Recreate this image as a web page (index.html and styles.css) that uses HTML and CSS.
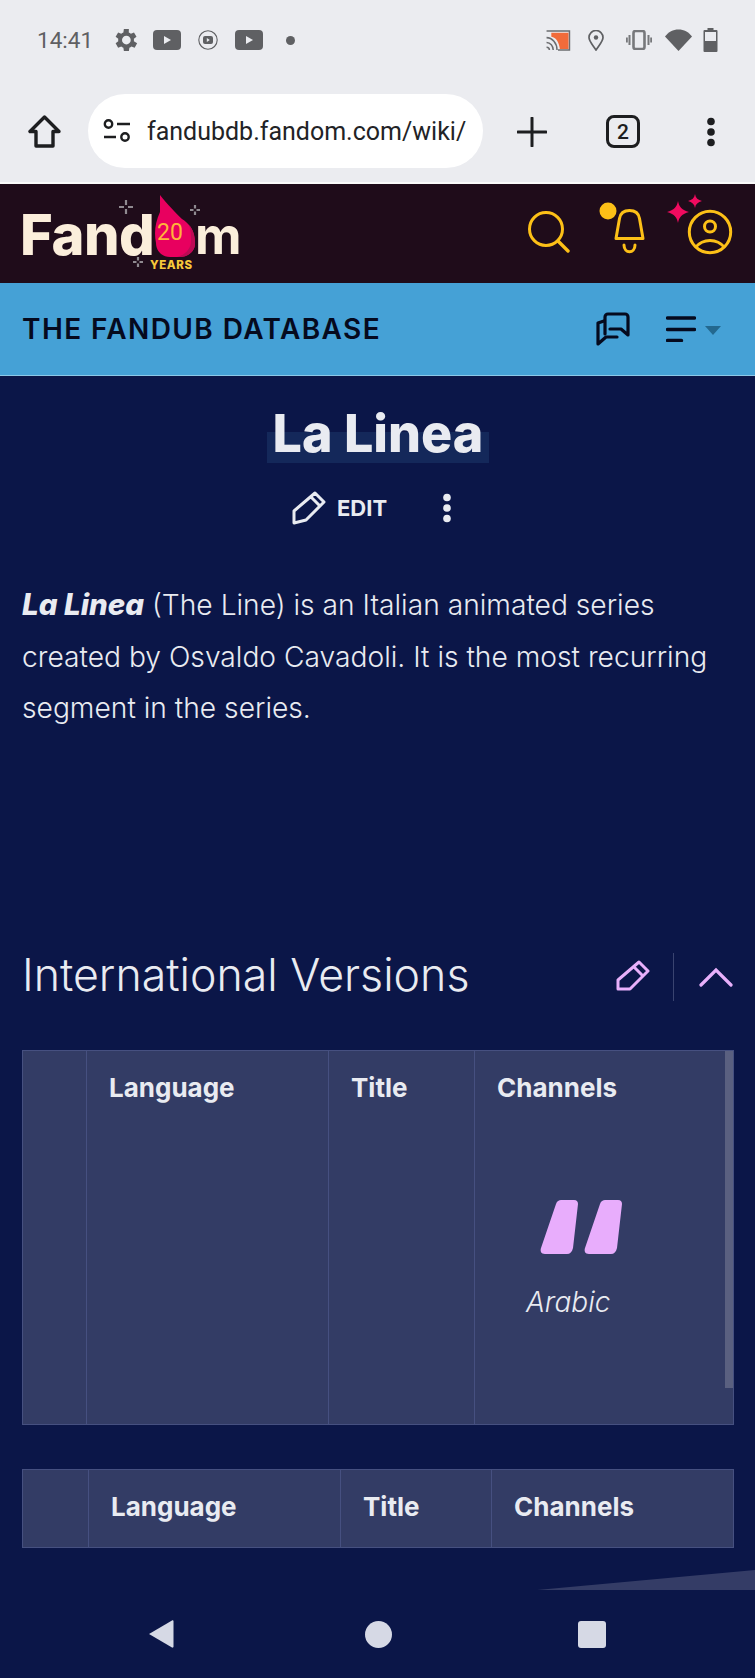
FILE: index.html
```html
<!DOCTYPE html>
<html>
<head>
  <title>La Linea | The Fandub Database</title>
  <link rel="stylesheet" href="styles.css">
</head>
<body>
  <div class="chrome">
    <div class="status-bar">
      <span class="clock">14:41</span>
      <svg class="st-gear" viewBox="0 0 24 24"><path fill="#5f6063" d="M19.4 13a7.500 7.500 0 0 0 0-2l2.100-1.600-2-3.500-2.500 1a7.500 7.500 0 0 0-1.700-1L15.400 3.200h-4l-.4 2.700a7.500 7.500 0 0 0-1.700 1l-2.500-1-2 3.500L6.900 11a7.500 7.500 0 0 0 0 2l-2.100 1.600 2 3.500 2.500-1a7.500 7.500 0 0 0 1.700 1l.4 2.700h4l.4-2.700a7.500 7.500 0 0 0 1.700-1l2.500 1 2-3.500zM13.400 15.500a3.500 3.500 0 1 1 0-7 3.500 3.500 0 0 1 0 7z" transform="translate(-1.100 0)"/></svg>
      <svg class="st-play" viewBox="0 0 28 20"><rect width="28" height="20" rx="4" fill="#5f6063"/><path d="M11 6l7 4-7 4z" fill="#ebecf0"/></svg>
      <svg class="st-disc" viewBox="0 0 20 20"><circle cx="10" cy="10" r="9.200" fill="none" stroke="#5f6063" stroke-width="1.100"/><rect x="5" y="6" width="10" height="8" rx="2" fill="#5f6063"/><path d="M8.800 8l3 2-3 2z" fill="#ebecf0"/></svg>
      <svg class="st-play st-play-last" viewBox="0 0 28 20"><rect width="28" height="20" rx="4" fill="#5f6063"/><path d="M11 6l7 4-7 4z" fill="#ebecf0"/></svg>
      <span class="st-dot"></span>
      <span class="st-spacer"></span>
      <svg class="st-cast" viewBox="0 0 26 22"><path d="M1 1h24v20H13" fill="none" stroke="#6b6c6f" stroke-width="1.600"/><path d="M6 3h18v17H15C14 12 11 8 6 7z" fill="#f26b3a"/><path d="M1 8c6 0 11 6 11 13M1 13c4 0 7 4 7 8M1 18c2 0 3 1 3 3" fill="none" stroke="#6b6c6f" stroke-width="1.600"/></svg>
      <svg class="st-pin" viewBox="0 0 18 21"><path d="M9 20C5 14 2 11 2 7.500a7 7 0 0 1 14 0C16 11 13 14 9 20z" fill="none" stroke="#5f6063" stroke-width="1.700"/><circle cx="9" cy="7.500" r="2.200" fill="#5f6063"/></svg>
      <svg class="st-vib" viewBox="0 0 26 20"><rect x="7.500" y="1" width="11" height="18" rx="2" fill="none" stroke="#77787b" stroke-width="2.600"/><path d="M3.500 5v10M22.500 5v10M.8 7.500v5M25.200 7.500v5" stroke="#77787b" stroke-width="2" fill="none"/></svg>
      <svg class="st-wifi" viewBox="0 0 27 22"><path d="M13.500 22L0 7.500C3.500 3 8 .5 13.500.5S23.500 3 27 7.500z" fill="#5f6063"/></svg>
      <svg class="st-batt" viewBox="0 0 15 24"><path d="M4.500 0h6v2h3a1 1 0 0 1 1 1v20a1 1 0 0 1-1 1h-12a1 1 0 0 1-1-1V3a1 1 0 0 1 1-1h3z" fill="#5f6063"/><rect x="2" y="4" width="11" height="9" fill="#ebecf0"/></svg>
    </div>
    <div class="toolbar">
      <svg class="tb-home" viewBox="0 0 33 33"><path d="M16.500 2L2 16.500h6V31h17V16.500h6z" fill="none" stroke="#1d1e20" stroke-width="3.400" stroke-linejoin="round"/></svg>
      <div class="url-pill">
        <svg class="tb-tune" viewBox="0 0 28 24"><circle cx="5.500" cy="5" r="3.700" fill="none" stroke="#1d1e20" stroke-width="2.400"/><path d="M14 5h13M1 18h12" stroke="#1d1e20" stroke-width="2.600" fill="none"/><circle cx="22" cy="18" r="3.700" fill="none" stroke="#1d1e20" stroke-width="2.400"/></svg>
        <span class="url-text">fandubdb.fandom.com/wiki/</span>
      </div>
      <svg class="tb-plus" viewBox="0 0 30 30"><path d="M15 1v28M1 15h28" stroke="#1d1e20" stroke-width="3" stroke-linecap="round"/></svg>
      <div class="tab-count">2</div>
      <svg class="tb-more" viewBox="0 0 10 30"><circle cx="5" cy="4.500" r="3.800" fill="#1d1e20"/><circle cx="5" cy="15" r="3.800" fill="#1d1e20"/><circle cx="5" cy="25.500" r="3.800" fill="#1d1e20"/></svg>
    </div>
  </div>

  <header class="global-nav">
    <div class="logo">
      <span class="logo-word logo-left">Fand</span>
      <div class="logo-flame">
        <svg viewBox="0 0 46 62"><path d="M10 0C18 10 26 18 32 24 38 28 45 34 45 49 45 56 38 62 30 62H20C12 62 6 56 6 48 4 38 5 28 10 17z" fill="#e8005f"/><path d="M39 30C43 34 45 40 45 49 45 56 38 62 30 62H27C35 60 41 54 41 46 41 40 41 35 39 30z" fill="#bd0a55"/></svg>
        <span class="logo-num">20</span>
      </div>
      <span class="logo-word logo-right">m</span>
      <span class="logo-years">YEARS</span>
      <svg class="logo-spark spark-a" viewBox="0 0 14 14"><path d="M7 0v5M7 9v5M0 7h5M9 7h5" stroke="#8f8a90" stroke-width="2.200" fill="none"/></svg>
      <svg class="logo-spark spark-b" viewBox="0 0 10 10"><path d="M5 0v3.500M5 6.500V10M0 5h3.500M6.500 5H10" stroke="#8f8a90" stroke-width="2.200" fill="none"/></svg>
      <svg class="logo-spark spark-c" viewBox="0 0 10 10"><path d="M5 0v3.500M5 6.500V10M0 5h3.500M6.500 5H10" stroke="#8f8a90" stroke-width="2.200" fill="none"/></svg>
    </div>
    <div class="nav-icons">
      <svg class="nav-search" viewBox="0 0 42 42"><circle cx="18" cy="18" r="16.500" fill="none" stroke="#fcc017" stroke-width="3"/><path d="M30 30l10 10" stroke="#fcc017" stroke-width="3.400" stroke-linecap="round"/></svg>
      <svg class="nav-bell" viewBox="0 0 46 54"><circle cx="9" cy="9" r="8.500" fill="#fcc017"/><path d="M17 36.500l3.500-20c1-6 5-8 10-8s9 2 10 8l3.500 20z" fill="none" stroke="#fcc017" stroke-width="3" stroke-linejoin="round"/><path d="M25 43c0 9 11 9 11 0" fill="none" stroke="#fcc017" stroke-width="3" stroke-linecap="round"/></svg>
      <svg class="nav-user" viewBox="0 0 66 60"><path d="M12 6c1 6 4 9 11 11-7 2-10 5-11 11-1-6-4-9-11-11 7-2 10-5 11-11z" fill="#f10b5f"/><circle cx="44" cy="37" r="20.700" fill="none" stroke="#fcc017" stroke-width="3"/><circle cx="44" cy="31.500" r="5.500" fill="none" stroke="#fcc017" stroke-width="3"/><path d="M29.500 52.500c4-5 9-7 14.500-7s10.500 2 14.500 7" fill="none" stroke="#fcc017" stroke-width="3"/><path d="M29-1c.6 4 3 6 7 7-4 1-6.400 3-7 7-.6-4-3-6-7-7 4-1 6.400-3 7-7z" fill="#f10b5f"/></svg>
    </div>
  </header>

  <div class="wiki-bar">
    <span class="wiki-name">THE FANDUB DATABASE</span>
    <svg class="wiki-chat" viewBox="0 0 34 34"><path d="M9 22V5a3 3 0 0 1 3-3h17a3 3 0 0 1 3 3v18l-7-6H14" fill="none" stroke="#050a1e" stroke-width="3.200" stroke-linejoin="round" stroke-linecap="round"/><path d="M8 9L2 11v21l8-7h11" fill="none" stroke="#050a1e" stroke-width="3.200" stroke-linejoin="round" stroke-linecap="round"/></svg>
    <svg class="wiki-menu" viewBox="0 0 30 26"><path d="M1.500 2h27M1.500 13.500h27M1.500 24.500h14" stroke="#050a1e" stroke-width="3.400" stroke-linecap="round"/></svg>
    <span class="wiki-caret"></span>
  </div>

  <main class="page">
    <div class="title-wrap">
      <h1 class="page-title">La Linea</h1>
    </div>
    <div class="page-actions">
      <svg class="edit-icon" viewBox="0 0 34 34"><path d="M23 2l9 9-18 18-12 3V20z M19 6l9 9" fill="none" stroke="#e9ebf1" stroke-width="3" stroke-linejoin="round"/></svg>
      <span class="edit-label">EDIT</span>
      <svg class="edit-more" viewBox="0 0 10 30"><circle cx="5" cy="4.500" r="3.800" fill="#e9ebf1"/><circle cx="5" cy="15" r="3.800" fill="#e9ebf1"/><circle cx="5" cy="25.500" r="3.800" fill="#e9ebf1"/></svg>
    </div>

    <p class="intro"><b><i>La Linea</i></b> (The Line) is an Italian animated series created by Osvaldo Cavadoli. It is the most recurring segment in the series.</p>

    <div class="section-head">
      <h2 class="section-title">International Versions</h2>
      <svg class="section-edit" viewBox="0 0 34 34"><path d="M23 2l9 9-18 18-12 0V20z M18 7l9 9" fill="none" stroke="#e8b0fb" stroke-width="3" stroke-linejoin="round"/></svg>
      <span class="section-rule"></span>
      <svg class="section-chevron" viewBox="0 0 34 20"><path d="M2 18L17 3l15 15" fill="none" stroke="#e8b0fb" stroke-width="3.200" stroke-linecap="round"/></svg>
    </div>

    <div class="versions versions-main">
      <div class="cell"></div>
      <div class="cell"><span class="th">Language</span></div>
      <div class="cell"><span class="th">Title</span></div>
      <div class="cell">
        <span class="th">Channels</span>
        <svg class="quote-mark" viewBox="0 0 82 54"><path d="M21 0h13c3 0 4 2 4 4l-5 44c-1 4-3 6-6 6H5c-4 0-5-3-4-6L16 4c1-3 3-4 5-4zM65 0h13c3 0 4 2 4 4l-5 44c-1 4-3 6-6 6H49c-4 0-5-3-4-6L60 4c1-3 3-4 5-4z" fill="#e8adfc"/></svg>
        <span class="quote-text">Arabic</span>
      </div>
      <span class="scroll-thumb"></span>
    </div>

    <div class="versions versions-next">
      <div class="cell"></div>
      <div class="cell"><span class="th">Language</span></div>
      <div class="cell"><span class="th">Title</span></div>
      <div class="cell"><span class="th">Channels</span></div>
    </div>
  </main>

  <footer class="system-nav">
    <span class="sliver"></span>
    <svg class="sys-back" viewBox="0 0 26 30"><path d="M24 1.500c.8-.4 1.500 0 1.500 1v25c0 1-.7 1.400-1.500 1L1 15z" fill="#d6d9e5"/></svg>
    <span class="sys-home"></span>
    <span class="sys-recent"></span>
  </footer>
</body>
</html>
```

FILE: styles.css
```css
* {
  box-sizing: border-box;
}
html, body {
  margin: 0;
  padding: 0;
}
body {
  width: 755px;
  height: 1678px;
  overflow: hidden;
  background-color: #0b1648;
  font-family: "Inter", "Liberation Sans", sans-serif;
  color: #e9ebf1;
  display: flex;
  flex-direction: column;
}
svg {
  display: block;
  flex: none;
}

/* browser chrome */
.chrome {
  height: 184px;
  background-color: #ebecf0;
  border-bottom: 2px solid #fafafa;
}
.status-bar {
  height: 80px;
  display: flex;
  align-items: center;
  padding-left: 37px;
  padding-right: 37px;
}
.clock {
  font-family: "Roboto", sans-serif;
  font-size: 22.500px;
  color: #5f6063;
  width: 78px;
}
.st-gear { width: 30px; height: 30px; margin-right: 12px; margin-left: -4px; }
.st-play { width: 28px; height: 20px; }
.st-disc { width: 20px; height: 20px; margin-left: 17px; margin-right: 17px; }
.st-play-last { margin-right: 23px; }
.st-dot {
  width: 9px;
  height: 9px;
  border-radius: 50%;
  background-color: #5f6063;
}
.st-spacer { flex: 1; }
.st-cast { width: 26px; height: 21px; }
.st-pin { width: 18px; height: 21px; margin-left: 16px; }
.st-vib { width: 26px; height: 20px; margin-left: 21px; }
.st-wifi { width: 27px; height: 22px; margin-left: 13px; }
.st-batt { width: 15px; height: 24px; margin-left: 11px; }

.toolbar {
  height: 102px;
  display: flex;
  align-items: flex-start;
  padding-top: 14px;
  padding-left: 28px;
}
.tb-home { width: 33px; height: 33px; margin-top: 21px; margin-right: 27px; }
.url-pill {
  width: 395px;
  height: 74px;
  border-radius: 37px;
  background-color: #fff;
  display: flex;
  align-items: center;
  padding-left: 15px;
}
.tb-tune { width: 28px; height: 24px; margin-right: 16px; }
.url-text {
  font-family: "Roboto", sans-serif;
  font-size: 25px;
  color: #222326;
  white-space: nowrap;
}
.tb-plus { width: 30px; height: 30px; margin-top: 23px; margin-left: 34px; margin-right: 59px; }
.tab-count {
  width: 34px;
  height: 33px;
  margin-top: 21px;
  margin-right: 66px;
  border: 3px solid #1d1e20;
  border-radius: 8px;
  font-family: "Roboto", sans-serif;
  font-size: 21px;
  font-weight: 500;
  color: #1d1e20;
  display: flex;
  align-items: center;
  justify-content: center;
}
.tb-more { width: 10px; height: 30px; margin-top: 23px; }

/* fandom bars */
.global-nav {
  height: 99px;
  background-color: #1f0c1a;
  display: flex;
  justify-content: space-between;
  padding-left: 20px;
}
.logo {
  position: relative;
  width: 218px;
  display: flex;
  align-items: flex-start;
}
.logo-word {
  display: block;
  margin-top: 21px;
  font-family: "Inter", sans-serif;
  font-weight: 800;
  font-size: 56px;
  line-height: 60px;
  color: #fbeedb;
  white-space: nowrap;
}
.logo-left {
  width: 130px;
  letter-spacing: -.5px;
}
.logo-flame {
  position: relative;
  flex: none;
  width: 46px;
  height: 62px;
  margin-top: 11px;
}
.logo-flame svg {
  width: 46px;
  height: 62px;
}
.logo-right {
  margin-left: -1px;
  font-size: 51px;
  font-weight: 700;
  margin-top: 22px;
}
.logo-num {
  position: absolute;
  left: 7px;
  top: 29px;
  font-family: "Roboto", sans-serif;
  font-size: 23px;
  line-height: 17px;
  color: #ffb33a;
}
.logo-years {
  position: absolute;
  left: 130px;
  top: 75px;
  font-family: "Inter", sans-serif;
  font-weight: 800;
  font-size: 11.500px;
  line-height: 12px;
  letter-spacing: .6px;
  color: #f7c93a;
}
.logo-spark {
  position: absolute;
}
.spark-a { left: 99px; top: 16px; width: 14px; height: 14px; }
.spark-b { left: 170px; top: 21px; width: 10px; height: 10px; }
.spark-c { left: 113px; top: 73px; width: 10px; height: 10px; }

.nav-icons {
  position: relative;
  width: 230px;
}
.nav-search { position: absolute; left: 3px; top: 27px; width: 42px; height: 42px; }
.nav-bell { position: absolute; left: 74px; top: 18px; width: 46px; height: 54px; }
.nav-user { position: absolute; left: 141px; top: 11px; width: 66px; height: 60px; overflow: visible; }

.wiki-bar {
  height: 93px;
  background-color: #45a1d6;
  border-bottom: 1px solid #8cc8e8;
  display: flex;
  align-items: center;
  padding-left: 22px;
}
.wiki-name {
  font-weight: 600;
  font-size: 28px;
  letter-spacing: 1.400px;
  color: #050a1e;
  width: 574px;
  white-space: nowrap;
}
.wiki-chat { width: 34px; height: 34px; margin-right: 36px; }
.wiki-menu { width: 30px; height: 26px; margin-right: 9px; }
.wiki-caret {
  width: 0;
  height: 0;
  margin-top: 2px;
  border-left: 8px solid transparent;
  border-right: 8px solid transparent;
  border-top: 9px solid #23688f;
}

/* page */
.page {
  flex: 1;
  padding: 0 21px 0 22px;
}
.title-wrap {
  display: flex;
  justify-content: center;
  padding-top: 28px;
}
.page-title {
  margin: 0;
  padding: 0 6px;
  font-size: 52px;
  font-weight: 800;
  line-height: 59px;
  color: #e9ebf1;
  background: linear-gradient(to bottom, transparent 47.500%, #14285a 47.500%);
}
.page-actions {
  display: flex;
  align-items: center;
  padding-left: 270px;
  margin-top: 28px;
}
.edit-icon { width: 34px; height: 34px; }
.edit-label {
  font-size: 22px;
  font-weight: 700;
  margin-left: 11px;
  width: 105px;
}
.edit-more { width: 10px; height: 30px; }

.intro {
  margin: 54px 0 0;
  font-size: 28.200px;
  font-weight: 300;
  line-height: 51.500px;
  color: #e9ebf1;
}
.intro b {
  font-size: 29.500px;
  font-weight: 800;
}

.section-head {
  display: flex;
  align-items: center;
  height: 48px;
  margin-top: 216px;
}
.section-title {
  margin: 0;
  flex: 1;
  font-size: 44.700px;
  font-weight: 300;
  color: #e9ebf1;
  white-space: nowrap;
}
.section-edit { width: 34px; height: 34px; margin-right: 23px; margin-top: 5px; }
.section-rule { width: 1px; height: 48px; background-color: #3a4470; margin-right: 25px; margin-top: 5px; }
.section-chevron { width: 34px; height: 20px; margin-right: 1px; margin-top: 5px; }

.versions {
  display: grid;
  background-color: #333c65;
  border: 1px solid #465080;
  position: relative;
}
.versions-main {
  height: 375px;
  margin-top: 51px;
  grid-template-columns: 63px 242px 146px 1fr;
}
.versions-next {
  height: 79px;
  margin-top: 44px;
  grid-template-columns: 65px 252px 151px 1fr;
}
.cell {
  border-left: 1px solid #465080;
  padding: 22px 22px;
}
.cell:first-child { border-left: none; }
.th {
  display: block;
  font-size: 26px;
  font-weight: 700;
  line-height: 30px;
  color: #e9ebf1;
}
.quote-mark {
  width: 82px;
  height: 54px;
  margin-top: 97px;
  margin-left: 43px;
}
.quote-text {
  display: block;
  margin-top: 31px;
  margin-left: 29px;
  font-size: 28px;
  font-weight: 300;
  font-style: italic;
  color: #e9ebf1;
}
.scroll-thumb {
  position: absolute;
  right: 0;
  top: 0;
  width: 8px;
  height: 337px;
  background-color: #5a6080;
}

/* android nav */
.system-nav {
  position: relative;
  height: 88px;
  display: flex;
  align-items: center;
  flex: none;
  padding-left: 148px;
}
.sliver {
  position: absolute;
  right: 0;
  top: -20px;
  width: 218px;
  height: 20px;
  background-color: #343c66;
  clip-path: polygon(0 100%, 100% 0, 100% 100%);
}
.sys-back { width: 26px; height: 30px; }
.sys-home {
  width: 27px;
  height: 27px;
  margin-left: 191px;
  border-radius: 50%;
  background-color: #d6d9e5;
}
.sys-recent {
  width: 28px;
  height: 27px;
  margin-left: 186px;
  border-radius: 3px;
  background-color: #d6d9e5;
}
```
